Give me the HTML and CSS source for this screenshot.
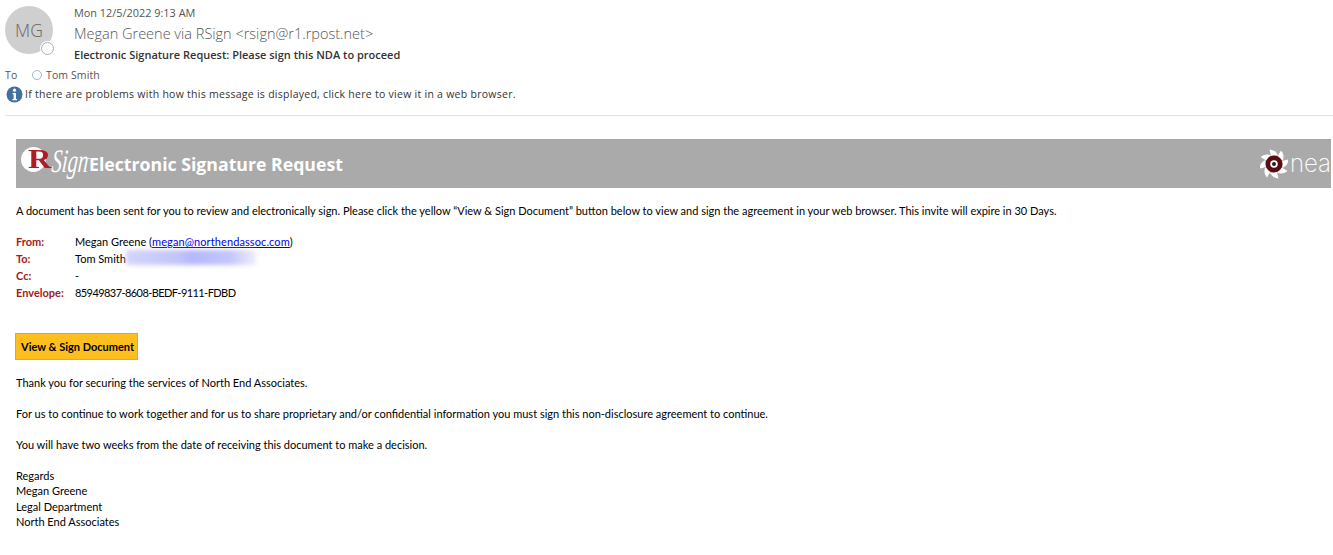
FILE: index.html
```html
<!DOCTYPE html>
<html>
<head>
    <title>Electronic Signature Request</title>
    <link rel="stylesheet" href="styles.css">
</head>
<body>
    <div class="header">
        <div class="sender">
            <div class="avatar">MG<span class="presence"></span></div>
            <div class="sender-info">
                <div class="date">Mon 12/5/2022 9:13 AM</div>
                <div class="from-name">Megan Greene via RSign &lt;rsign@r1.rpost.net&gt;</div>
                <div class="subject">Electronic Signature Request: Please sign this NDA to proceed</div>
            </div>
        </div>
        <div class="to-line">
            <span class="to-label">To</span>
            <span class="to-circle"></span>
            <span>Tom Smith</span>
        </div>
        <div class="info-line">
            <svg class="info-icon" width="17" height="17" viewBox="0 0 17 17">
                <circle cx="8.5" cy="8.5" r="8" fill="#41719c"/>
                <circle cx="8.5" cy="4.2" r="1.6" fill="#fff"/>
                <path d="M6.6 7h3.4v6h1v1.3H6.4V13h1.2V8.3h-1z" fill="#fff"/>
            </svg>
            <span>If there are problems with how this message is displayed, click here to view it in a web browser.</span>
        </div>
    </div>

    <div class="message">
        <div class="banner">
            <div class="rsign-logo">
                <span class="r-circle"></span>
                <span class="r-mark">R</span>
                <span class="sign-script">Sign</span>
                <span class="tm-dash"></span>
            </div>
            <span class="banner-title">Electronic Signature Request</span>
            <div class="nea-logo">
                <svg width="28" height="30" viewBox="0 0 28 30">
                    <g fill="#fff">
                        <path d="M11 7 L9.500 0.500 Q15.500 1 18 6.500z"/>
                        <path d="M11 7 L9.500 0.500 Q15.500 1 18 6.500z" transform="rotate(45 14 15)"/>
                        <path d="M11 7 L9.500 0.500 Q15.500 1 18 6.500z" transform="rotate(90 14 15)"/>
                        <path d="M11 7 L9.500 0.500 Q15.500 1 18 6.500z" transform="rotate(135 14 15)"/>
                        <path d="M11 7 L9.500 0.500 Q15.500 1 18 6.500z" transform="rotate(180 14 15)"/>
                        <path d="M11 7 L9.500 0.500 Q15.500 1 18 6.500z" transform="rotate(225 14 15)"/>
                        <path d="M11 7 L9.500 0.500 Q15.500 1 18 6.500z" transform="rotate(270 14 15)"/>
                        <path d="M11 7 L9.500 0.500 Q15.500 1 18 6.500z" transform="rotate(315 14 15)"/>
                    </g>
                    <circle cx="14" cy="15" r="8.500" fill="#5a0d12"/>
                    <circle cx="14" cy="15" r="3.800" fill="#fff"/>
                    <circle cx="14" cy="15" r="2" fill="#222"/>
                </svg>
                <span class="nea-text">nea</span>
            </div>
        </div>

        <p class="intro">A document has been sent for you to review and electronically sign. Please click the yellow “View &amp; Sign Document” button below to view and sign the agreement in your web browser. This invite will expire in 30 Days.</p>

        <div class="details">
            <div class="label">From:</div>
            <div>Megan Greene (<a href="#">megan@northendassoc.com</a>)</div>
            <div class="label">To:</div>
            <div class="to-value">Tom Smith<span class="blurred"></span></div>
            <div class="label">Cc:</div>
            <div>-</div>
            <div class="label">Envelope:</div>
            <div class="envelope-id">85949837-8608-BEDF-9111-FDBD</div>
        </div>

        <a class="sign-button" href="#">View &amp; Sign Document</a>

        <p class="para first">Thank you for securing the services of North End Associates.</p>
        <p class="para">For us to continue to work together and for us to share proprietary and/or confidential information you must sign this non-disclosure agreement to continue.</p>
        <p class="para">You will have two weeks from the date of receiving this document to make a decision.</p>

        <div class="signature">
            <div>Regards</div>
            <div>Megan Greene</div>
            <div>Legal Department</div>
            <div>North End Associates</div>
        </div>
    </div>
</body>
</html>
```

FILE: styles.css
```css
html, body {
    height: 555px;
    overflow: hidden;
}
body {
    margin: 0;
    background-color: #fff;
    color: #000;
    font-family: Lato, "Open Sans", sans-serif;
    font-size: 11px;
}
.header {
    height: 115px;
    margin-left: 5px;
    border-bottom: 1px solid #e1e1e1;
    color: #444;
}
.sender {
    display: flex;
    height: 66px;
}
.avatar {
    position: relative;
    width: 48px;
    height: 48px;
    margin-top: 6px;
    border-radius: 50%;
    background-color: #cfcfcf;
    color: #666;
    font-family: "Open Sans", sans-serif;
    font-size: 17.5px;
    font-weight: 300;
    line-height: 48px;
    text-align: center;
}
.presence {
    position: absolute;
    right: -1px;
    bottom: -1px;
    width: 11px;
    height: 11px;
    border: 1px solid #9fb6c4;
    border-radius: 50%;
    background-color: #fff;
    box-shadow: 0 0 0 1px #fff;
}
.sender-info {
    margin-left: 21px;
    font-family: "Open Sans", sans-serif;
}
.date {
    margin-top: 6px;
    font-size: 10.9px;
    line-height: 14px;
    color: #555;
}
.from-name {
    margin-top: 4px;
    font-size: 14.5px;
    font-weight: 300;
    line-height: 19px;
    color: #555;
}
.subject {
    margin-top: 4px;
    font-size: 11px;
    line-height: 16px;
    font-weight: 600;
    color: #333;
}
.to-line {
    display: flex;
    align-items: center;
    height: 18px;
    font-family: "Open Sans", sans-serif;
    font-size: 10.5px;
    letter-spacing: .1px;
    color: #555;
}
.to-label {
    width: 27px;
}
.to-circle {
    width: 8px;
    height: 8px;
    margin-right: 4px;
    border: 1px solid #9fb6c4;
    border-radius: 50%;
}
.info-line {
    display: flex;
    align-items: center;
    height: 20px;
    font-family: "Open Sans", sans-serif;
    font-size: 10.5px;
    letter-spacing: .27px;
    color: #333;
}
.info-icon {
    margin: 0 2px 0 1px;
}
.message {
    padding: 23px 2px 0 16px;
}
.banner {
    display: flex;
    align-items: center;
    height: 49px;
    background-color: #aaa;
}
.rsign-logo {
    position: relative;
    flex: none;
    width: 73px;
    height: 49px;
}
.r-circle {
    position: absolute;
    left: 5px;
    top: 8px;
    width: 25px;
    height: 25px;
    border-radius: 50%;
    background-color: #fff;
}
.r-mark {
    position: absolute;
    left: 12px;
    top: 5px;
    color: #b01c24;
    font-family: "Liberation Serif", serif;
    font-size: 27px;
    font-weight: 700;
    line-height: 30px;
    transform: scaleX(1.2);
    transform-origin: left;
}
.sign-script {
    position: absolute;
    left: 36px;
    top: 4px;
    color: #fff;
    font-family: "Liberation Serif", serif;
    font-style: italic;
    font-size: 33px;
    line-height: 36px;
    transform: scaleX(.62) skewX(-8deg);
    transform-origin: left;
}
.tm-dash {
    position: absolute;
    left: 70px;
    top: 19px;
    width: 4px;
    height: 1px;
    background-color: #eee;
}
.banner-title {
    color: #fff;
    font-family: "Open Sans", sans-serif;
    font-size: 17.7px;
    font-weight: 700;
}
.nea-logo {
    display: flex;
    align-items: center;
    margin-left: auto;
}
.nea-text {
    margin-left: 2px;
    color: #fff;
    font-family: Inter, sans-serif;
    font-size: 24px;
    font-weight: 200;
}
.intro {
    margin: 16px 0 0;
    line-height: 14px;
}
.details {
    display: grid;
    grid-template-columns: 59px auto;
    justify-content: start;
    margin-top: 15px;
    line-height: 17px;
}
.label {
    color: #a31a22;
    font-weight: 700;
}
.details a {
    color: #00e;
    letter-spacing: .1px;
}
.to-value {
    display: flex;
}
.envelope-id {
    letter-spacing: -.57px;
}
.blurred {
    width: 130px;
    height: 15px;
    background: linear-gradient(90deg, #d3d5fc, #c2c4fb 40%, #b5b8fb 50%, #c4c6fb 80%, #eeeef8);
    filter: blur(2px);
}
.sign-button {
    display: inline-block;
    margin: 32px 0 0 -1px;
    padding: 0 3px 0 5px;
    border: 1px solid #e0a82e;
    background-color: #fdbf20;
    color: #000;
    font-weight: 700;
    line-height: 25px;
    text-decoration: none;
}
.para {
    margin: 16px 0 0;
    line-height: 15px;
}
.para.first {
    margin-top: 15px;
}
.signature {
    margin-top: 16px;
    line-height: 15.4px;
}
```
